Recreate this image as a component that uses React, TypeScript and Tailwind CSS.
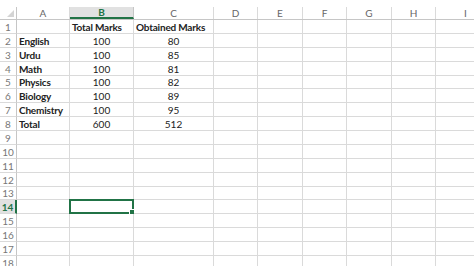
import React from "react";

const cols = ["A", "B", "C", "D", "E", "F", "G", "H", "I"];
const colWidths = ["w-[53px]", "w-[64px]", "w-[80px]", "w-[44px]", "w-[45px]", "w-[44px]", "w-[45px]", "w-[44px]", "w-[60px]"];

const data: Record<number, [string, string, string]> = {
  1: ["", "Total Marks", "Obtained Marks"],
  2: ["English", "100", "80"],
  3: ["Urdu", "100", "85"],
  4: ["Math", "100", "81"],
  5: ["Physics", "100", "82"],
  6: ["Biology", "100", "89"],
  7: ["Chemistry", "100", "95"],
  8: ["Total", "600", "512"],
};

const rows = Array.from({ length: 18 }, (_, i) => i + 1);

export default function App() {
  return (
    <div className="w-[474px] h-[266px] overflow-hidden bg-white font-['Lato','Open_Sans',sans-serif] text-[10px] text-[#222]">
      <div className="h-[7px]" />
      {/* column headers */}
      <div className="flex h-[13px] border-b border-[#c6c6c6]">
        <div className="relative w-[17px] shrink-0 border-r border-[#c6c6c6]">
          <div className="absolute right-[2px] bottom-[2px] w-0 h-0 border-l-[7px] border-l-transparent border-b-[7px] border-b-[#d4d4d4]" />
        </div>
        {cols.map((c, i) => (
          <div
            key={c}
            className={`${colWidths[i]} shrink-0 flex items-center justify-center text-[10px] leading-none border-r ${
              c === "B"
                ? "bg-[#e1e1e1] text-[#217346] font-bold border-b-2 border-b-[#217346] border-r-[#c6c6c6]"
                : "text-[#666] border-[#dadada]"
            }`}
          >
            {c}
          </div>
        ))}
      </div>
      {rows.map((r) => {
        const d = data[r];
        const h = r === 5 || r === 13 ? "h-[13px]" : "h-[14px]";
        const sel = r === 14;
        return (
          <div key={r} className={`flex ${h}`}>
            <div
              className={`w-[17px] shrink-0 flex items-center justify-center text-[10px] leading-none border-b border-b-[#dadada] ${
                sel
                  ? "bg-[#e1e1e1] text-[#217346] font-bold border-r-2 border-r-[#217346]"
                  : "text-[#777] border-r border-r-[#c6c6c6]"
              }`}
            >
              {r}
            </div>
            {cols.map((c, i) => {
              let content = "";
              let align = "justify-start pl-[2px]";
              let weight = "";
              if (d && i < 3) {
                content = d[i];
                if (i === 0 || r === 1) weight = "font-bold tracking-[-0.2px]";
                if (i > 0 && r !== 1) align = "justify-center";
              }
              const active = sel && c === "B";
              return (
                <div
                  key={c}
                  className={`${colWidths[i]} shrink-0 relative flex items-center ${align} ${weight} whitespace-nowrap leading-none border-r border-b border-[#dadada]`}
                >
                  {content}
                  {active && (
                    <>
                      <div className="absolute -left-[1px] -top-[1px] -right-[1px] -bottom-[1px] border-2 border-[#217346]" />
                      <div className="absolute -right-[2px] -bottom-[2px] w-[4px] h-[4px] bg-[#217346] border border-white box-content" />
                    </>
                  )}
                </div>
              );
            })}
          </div>
        );
      })}
    </div>
  );
}
